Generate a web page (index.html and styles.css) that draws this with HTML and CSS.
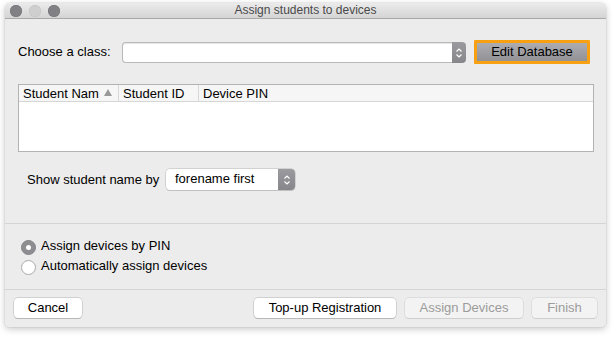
FILE: index.html
```html
<!DOCTYPE html>
<html>
<head>
<meta charset="utf-8">
<link rel="stylesheet" href="styles.css">
</head>
<body>
<div class="window">
  <div class="titlebar">
    <div class="lights">
      <span class="light dark"></span>
      <span class="light pale"></span>
      <span class="light dark"></span>
    </div>
    <div class="title">Assign students to devices</div>
    <div></div>
  </div>

  <div class="content">
    <div class="class-row">
      <span class="label">Choose a class:</span>
      <div class="combo">
        <div class="combo-field"></div>
        <div class="stepper">
          <svg width="8" height="12" viewBox="0 0 8 12"><path d="M1.5 4.5 L4 2 L6.5 4.5 M1.5 7.5 L4 10 L6.5 7.5" fill="none" stroke="#fff" stroke-width="1.2"/></svg>
        </div>
      </div>
      <div class="focus-ring"><div class="btn-gray">Edit Database</div></div>
    </div>

    <div class="table">
      <div class="thead">
        <div class="th c1">Student Nam<svg class="sort" width="8" height="7" viewBox="0 0 8 7"><polygon points="4,0 8,7 0,7" fill="#999999"/></svg></div>
        <div class="th c2">Student ID</div>
        <div class="th c3">Device PIN</div>
      </div>
      <div class="tbody"></div>
    </div>

    <div class="show-row">
      <span class="label">Show student name by</span>
      <div class="popup">
        <div class="popup-text">forename first</div>
        <div class="popup-stepper">
          <svg width="8" height="12" viewBox="0 0 8 12"><path d="M1.5 4.5 L4 2 L6.5 4.5 M1.5 7.5 L4 10 L6.5 7.5" fill="none" stroke="#fff" stroke-width="1.2"/></svg>
        </div>
      </div>
    </div>
  </div>

  <div class="sep"></div>

  <div class="radios">
    <div class="radio-row"><span class="radio on"><span class="dot"></span></span><span>Assign devices by PIN</span></div>
    <div class="radio-row"><span class="radio"></span><span>Automatically assign devices</span></div>
  </div>

  <div class="sep sep2"></div>

  <div class="buttons">
    <div class="btn w-cancel">Cancel</div>
    <div class="spacer"></div>
    <div class="btn w-topup">Top-up Registration</div>
    <div class="btn disabled w-assign">Assign Devices</div>
    <div class="btn disabled w-finish">Finish</div>
  </div>
</div>
</body>
</html>
```

FILE: styles.css
```css
* { box-sizing: border-box; }
html, body { margin: 0; padding: 0; background: #ffffff; }
body {
  font-family: "Liberation Sans", Arial, sans-serif;
  font-size: 13px;
  color: #000;
  width: 613px;
  height: 338px;
  overflow: hidden;
}
.window {
  margin: 3px 0 0 5px;
  width: 601px;
  height: 324px;
  background: #ececec;
  border-radius: 5px 5px 4px 4px;
  box-shadow: 0 2px 7px rgba(0,0,0,0.22), 0 0 0 0.5px rgba(0,0,0,0.08);
  display: flex;
  flex-direction: column;
  overflow: hidden;
}
.titlebar {
  height: 16px;
  border-bottom: 1px solid #a9a9a9;
  background: linear-gradient(#ebebeb, #d4d4d4);
  display: grid;
  grid-template-columns: 1fr auto 1fr;
  align-items: center;
}
.lights { display: flex; gap: 7px; padding-left: 5px; }
.light { width: 12px; height: 12px; border-radius: 50%; display: block; }
.light.dark { background: #808085; box-shadow: inset 0 0 0 0.5px #707075; }
.light.pale { background: #cfcfcf; box-shadow: inset 0 0 0 0.5px #c2c2c2; }
.title { font-size: 12px; color: #4a4a4a; line-height: 15px; }

.content { padding: 0 12px 0 13px; display: flex; flex-direction: column; }
.class-row { margin-top: 21px; height: 24px; display: flex; align-items: center; }
.label { line-height: 16px; }
.class-row .label { width: 104px; }
.combo { width: 344px; height: 21px; display: flex; margin-top: 1px; }
.combo-field {
  flex: 1;
  background: #fff;
  border: 1px solid #b9b9b9;
  border-right: none;
  border-radius: 4px 0 0 4px;
  box-shadow: inset 0 1px 0 #e6e6e6;
}
.stepper, .popup-stepper {
  width: 14px;
  background: linear-gradient(#9a9a9f, #86868b);
  border-radius: 0 4px 4px 0;
  display: flex;
  align-items: center;
  justify-content: center;
}
.focus-ring {
  margin-left: 8px;
  width: 116px;
  height: 24px;
  border: 3px solid #f6a012;
  border-radius: 1px;
  display: flex;
}
.btn-gray {
  flex: 1;
  background: linear-gradient(#adadb1, #919196);
  display: flex;
  align-items: center;
  justify-content: center;
  color: #000;
  line-height: 16px;
  padding-bottom: 1px;
}

.table {
  margin-top: 20px;
  height: 68px;
  border: 1px solid #b3b3b3;
  background: #fff;
  display: flex;
  flex-direction: column;
}
.thead {
  height: 17px;
  background: #f6f6f6;
  border-bottom: 1px solid #d6d6d6;
  display: flex;
  align-items: center;
}
.th {
  height: 100%;
  display: flex;
  align-items: center;
  padding-left: 4px;
  line-height: 15px;
}
.c1 { width: 100px; border-right: 1px solid #d8d8d8; }
.c2 { width: 80px; border-right: 1px solid #d8d8d8; }
.sort { margin-left: 5px; margin-top: -1px; }
.tbody { flex: 1; }

.show-row { margin-top: 17px; height: 21px; display: flex; align-items: center; padding-left: 9px; }
.show-row .label { width: 139px; }
.popup {
  width: 129px;
  height: 21px;
  display: flex;
  border-radius: 4px;
  box-shadow: 0 0 0 0.5px #b8b8b8, 0 1px 0 #c8c8c8;
  background: #fff;
}
.popup-text { flex: 1; padding-left: 9px; line-height: 20px; }
.popup-stepper { width: 17px; }

.sep { margin-top: 33px; height: 1px; background: #d5d5d5; }
.sep2 { margin-top: 12px; }

.radios { margin-top: 13px; padding-left: 16px; display: flex; flex-direction: column; }
.radio-row { display: flex; align-items: flex-start; height: 20px; line-height: 17px; gap: 5px; }
.radio {
  width: 15px;
  height: 15px;
  margin-top: 3px;
  border-radius: 50%;
  background: #fff;
  border: 1px solid #a9a9a9;
  display: flex;
  align-items: center;
  justify-content: center;
  flex: none;
}
.radio.on { background: #8e8e92; border-color: #838387; }
.dot { width: 5px; height: 5px; border-radius: 50%; background: #fff; }

.buttons { margin-top: 8px; padding: 0 9px; display: flex; gap: 9px; }
.spacer { flex: 1; }
.btn {
  height: 20px;
  background: #fff;
  border-radius: 4px;
  box-shadow: 0 0 0 0.5px #b4b4b4, 0 1px 0.5px #bdbdbd;
  display: flex;
  align-items: center;
  justify-content: center;
  line-height: 16px;
  color: #000;
  padding-bottom: 1px;
}
.btn.disabled { background: #f3f3f3; color: #9b9b9b; box-shadow: 0 0 0 0.5px #cdcdcd, 0 1px 0.5px #d0d0d0; }
.w-cancel { width: 68px; }
.w-topup { width: 142px; }
.w-assign { width: 118px; }
.w-finish { width: 65px; }
```
